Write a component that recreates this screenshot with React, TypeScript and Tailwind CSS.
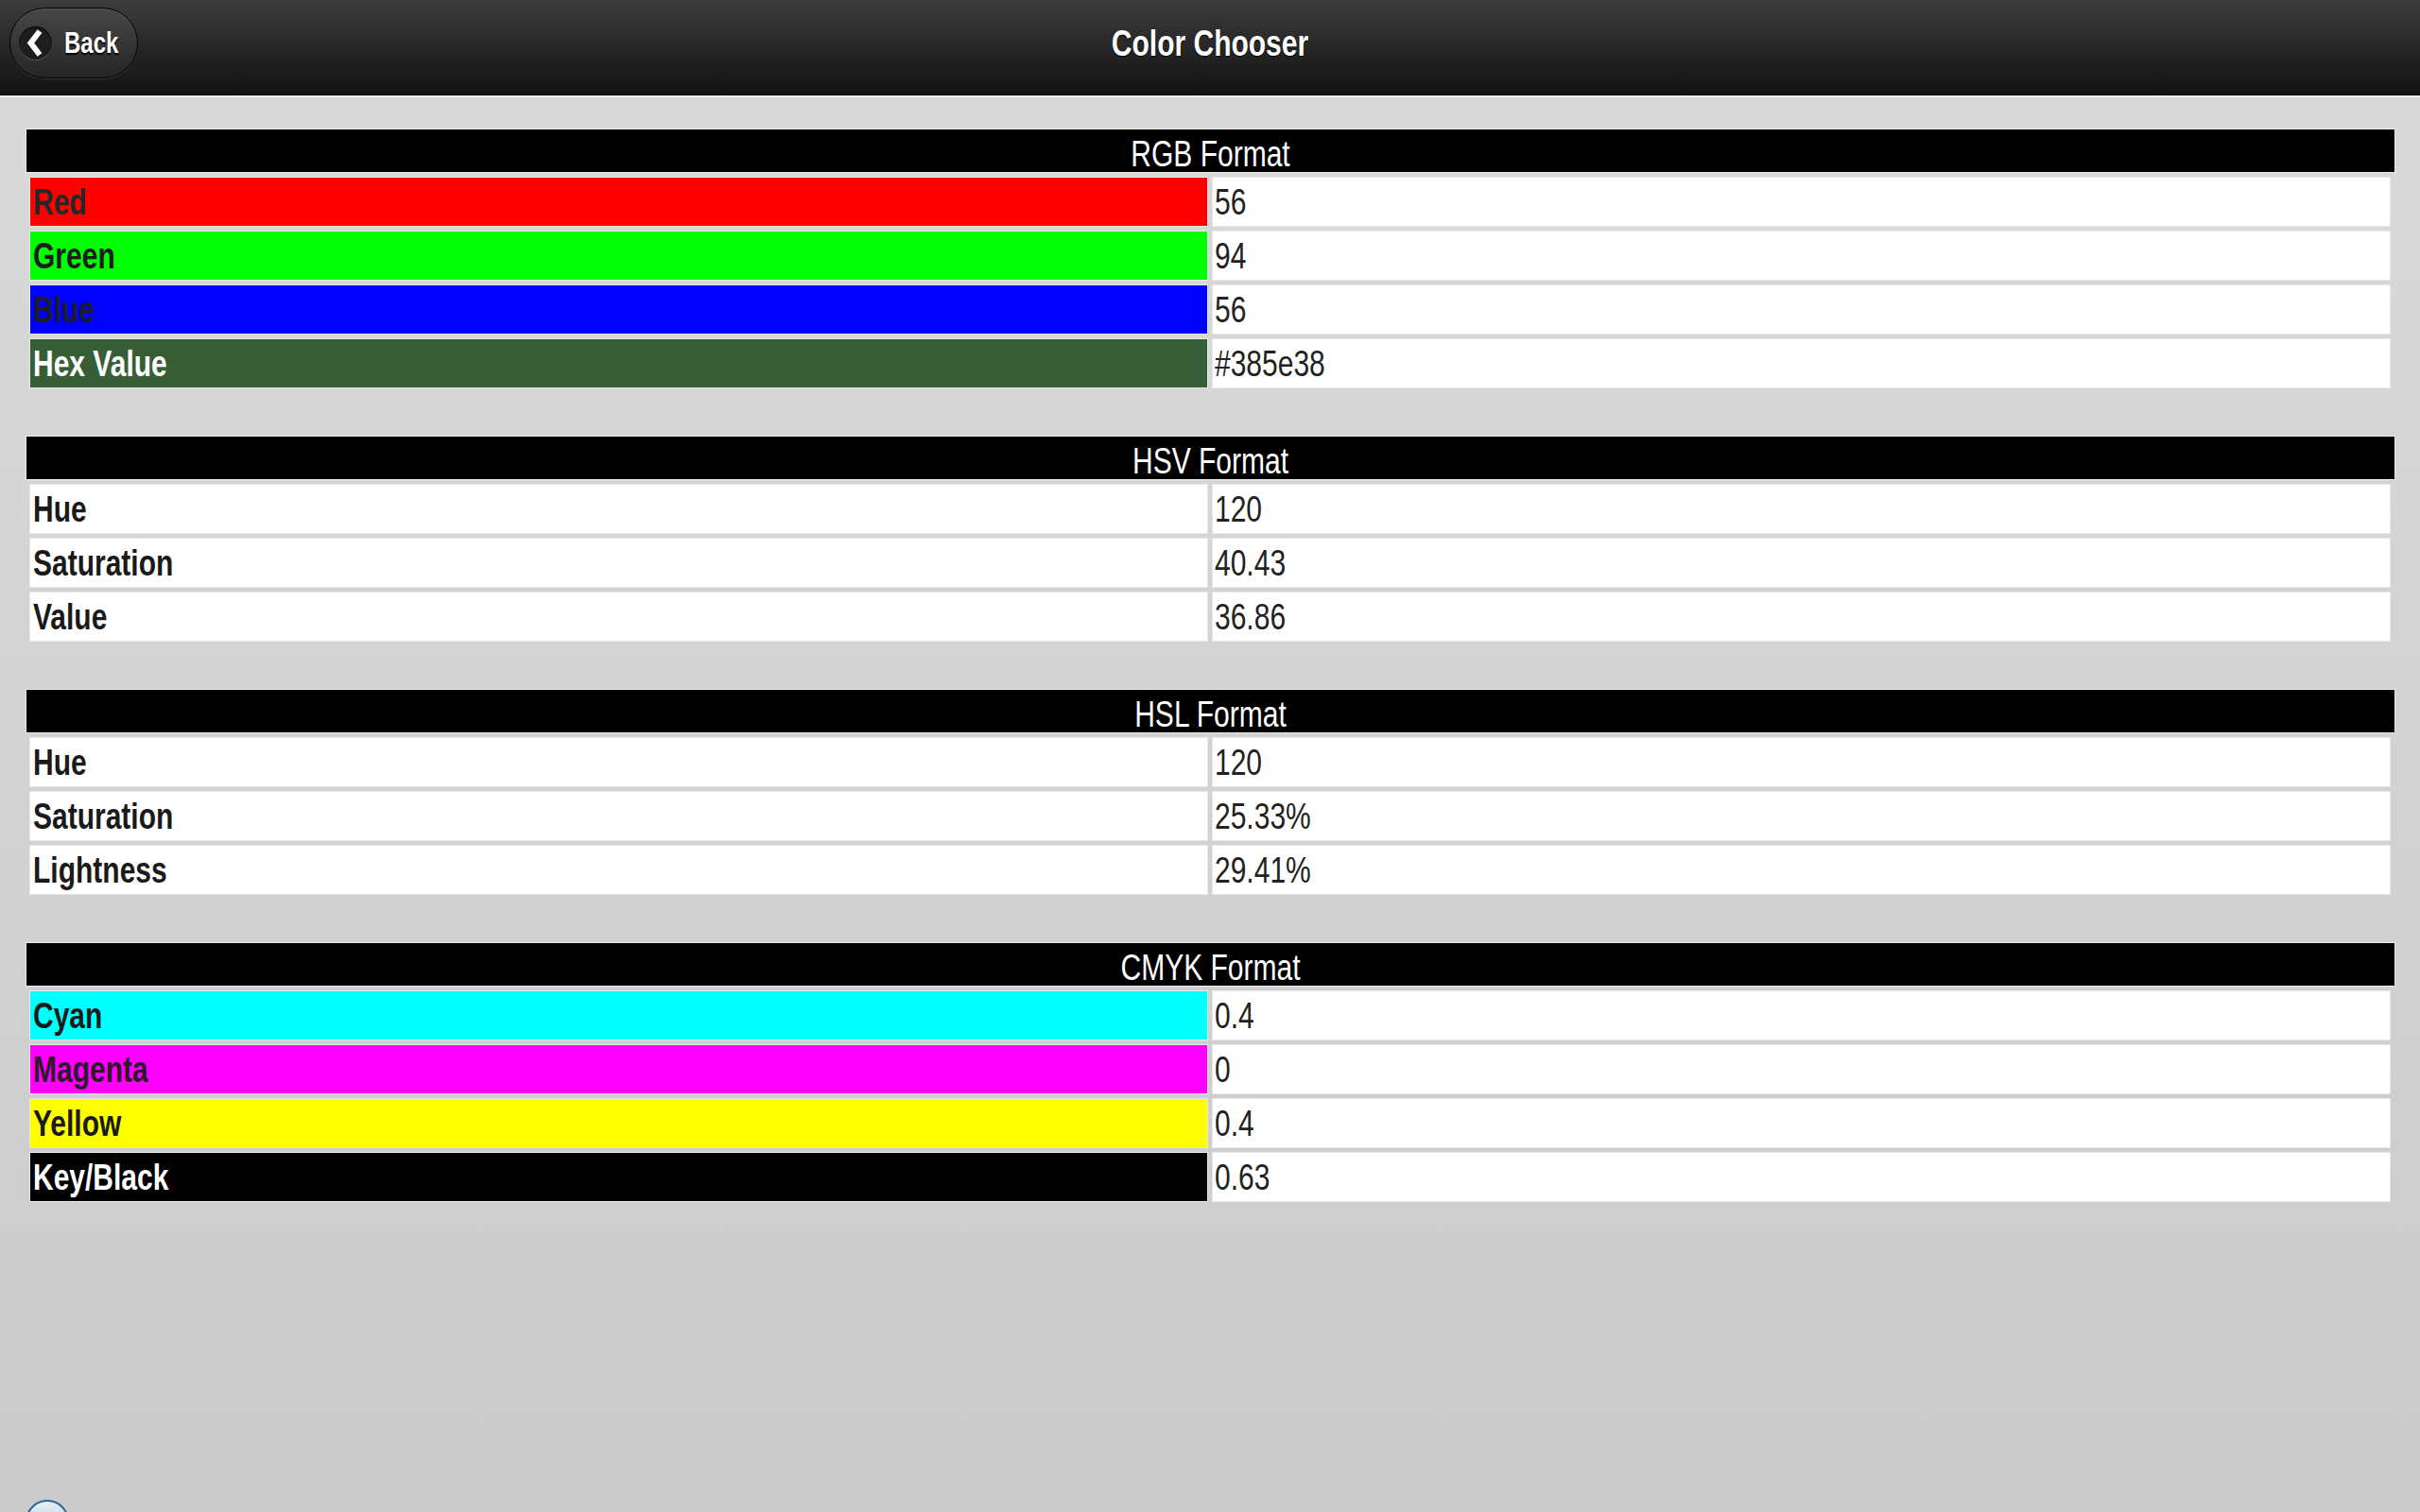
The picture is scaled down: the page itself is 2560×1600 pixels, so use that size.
import React from "react";

type Row = { label: string; value: string; cell?: string; text?: string };
type Section = { title: string; rows: Row[] };

const sections: Section[] = [
  {
    title: "RGB Format",
    rows: [
      { label: "Red", value: "56", cell: "bg-[#ff0000]", text: "text-[#1f2a2a]" },
      { label: "Green", value: "94", cell: "bg-[#00ff00]", text: "text-[#1f1a22]" },
      { label: "Blue", value: "56", cell: "bg-[#0000ff]", text: "text-[#1d1d24]" },
      { label: "Hex Value", value: "#385e38", cell: "bg-[#385e38]", text: "text-white" },
    ],
  },
  {
    title: "HSV Format",
    rows: [
      { label: "Hue", value: "120" },
      { label: "Saturation", value: "40.43" },
      { label: "Value", value: "36.86" },
    ],
  },
  {
    title: "HSL Format",
    rows: [
      { label: "Hue", value: "120" },
      { label: "Saturation", value: "25.33%" },
      { label: "Lightness", value: "29.41%" },
    ],
  },
  {
    title: "CMYK Format",
    rows: [
      { label: "Cyan", value: "0.4", cell: "bg-[#00ffff]", text: "text-[#1a1a1a]" },
      { label: "Magenta", value: "0", cell: "bg-[#ff00ff]", text: "text-[#2a1a2a]" },
      { label: "Yellow", value: "0.4", cell: "bg-[#ffff00]", text: "text-[#1a1a1a]" },
      { label: "Key/Black", value: "0.63", cell: "bg-[#000000]", text: "text-white" },
    ],
  },
];

// text in the shot is stretched vertically, so stretch it with scale-y
function Tall({ children, className = "" }: { children: React.ReactNode; className?: string }) {
  return <span className={"inline-block leading-none scale-y-[1.3] whitespace-nowrap " + className}>{children}</span>;
}

function BackButton() {
  return (
    <button
      type="button"
      className="absolute left-[10px] top-[8px] flex h-[75px] w-[136px] items-center gap-[13px] rounded-full border border-black bg-linear-to-b from-[#474747] to-[#262626] pl-[9px] shadow-[inset_0_1px_0_#5a5a5a,0_1px_0_#3a3a3a]"
    >
      <span className="flex h-[35px] w-[35px] items-center justify-center rounded-full bg-[#1e1e1e] shadow-[0_1px_0_#5c5c5c,inset_0_1px_2px_#000]">
        <svg width="35" height="35" viewBox="0 0 35 35">
          <polyline points="22,5 12.5,17.5 22,30" fill="none" stroke="#fff" strokeWidth="6" strokeLinejoin="miter" />
        </svg>
      </span>
      <Tall className="text-[24px] font-bold text-white [text-shadow:0_1px_1px_#000]">Back</Tall>
    </button>
  );
}

function FormatTable({ section }: { section: Section }) {
  return (
    <div className="flex flex-col">
      <div className="flex h-[47px] items-center justify-center border border-[#ebebeb] bg-black pt-[6px]">
        <Tall className="text-[30px] text-white">{section.title}</Tall>
      </div>
      <div className="ml-[4px] mr-[5px] mt-[4px] flex flex-col gap-[4px]">
        {section.rows.map((r, i) => (
          <div key={i} className="grid h-[53px] grid-cols-2 gap-x-[4px]">
            <div
              className={
                "flex items-center border border-[#e8e8e8] px-[3px] " + (r.cell ?? "bg-white")
              }
            >
              <Tall className={"text-[30px] font-bold " + (r.text ?? "text-[#1a1a1a]")}>{r.label}</Tall>
            </div>
            <div className="flex items-center border border-[#e8e8e8] bg-white px-[2px]">
              <Tall className="text-[30px] text-[#222]">{r.value}</Tall>
            </div>
          </div>
        ))}
      </div>
    </div>
  );
}

export default function App() {
  return (
    <div className="relative h-screen w-full overflow-hidden bg-linear-to-b from-[#dadada] to-[#cbcbcb] font-['Liberation_Sans',Arial,sans-serif]">
      <header className="relative flex h-[101px] items-center justify-center border-b border-black bg-linear-to-b from-[#3d3d3d] to-[#121212]">
        <BackButton />
        <h1 className="-mt-[7px]">
          <Tall className="text-[30px] font-bold text-white [text-shadow:0_1px_1px_#000]">Color Chooser</Tall>
        </h1>
      </header>
      <main className="flex flex-col gap-[50px] border-t-2 border-[#ececec] pl-[27px] pr-[26px] pt-[33px]">
        {sections.map((s) => (
          <FormatTable key={s.title} section={s} />
        ))}
      </main>
      {/* partially visible floating icon at the bottom edge */}
      <div className="absolute left-[27px] top-[1587px] h-[46px] w-[46px] rounded-full border-2 border-[#2d6597] bg-linear-to-b from-[#e6eef5] to-[#a8c2da]" />
    </div>
  );
}
